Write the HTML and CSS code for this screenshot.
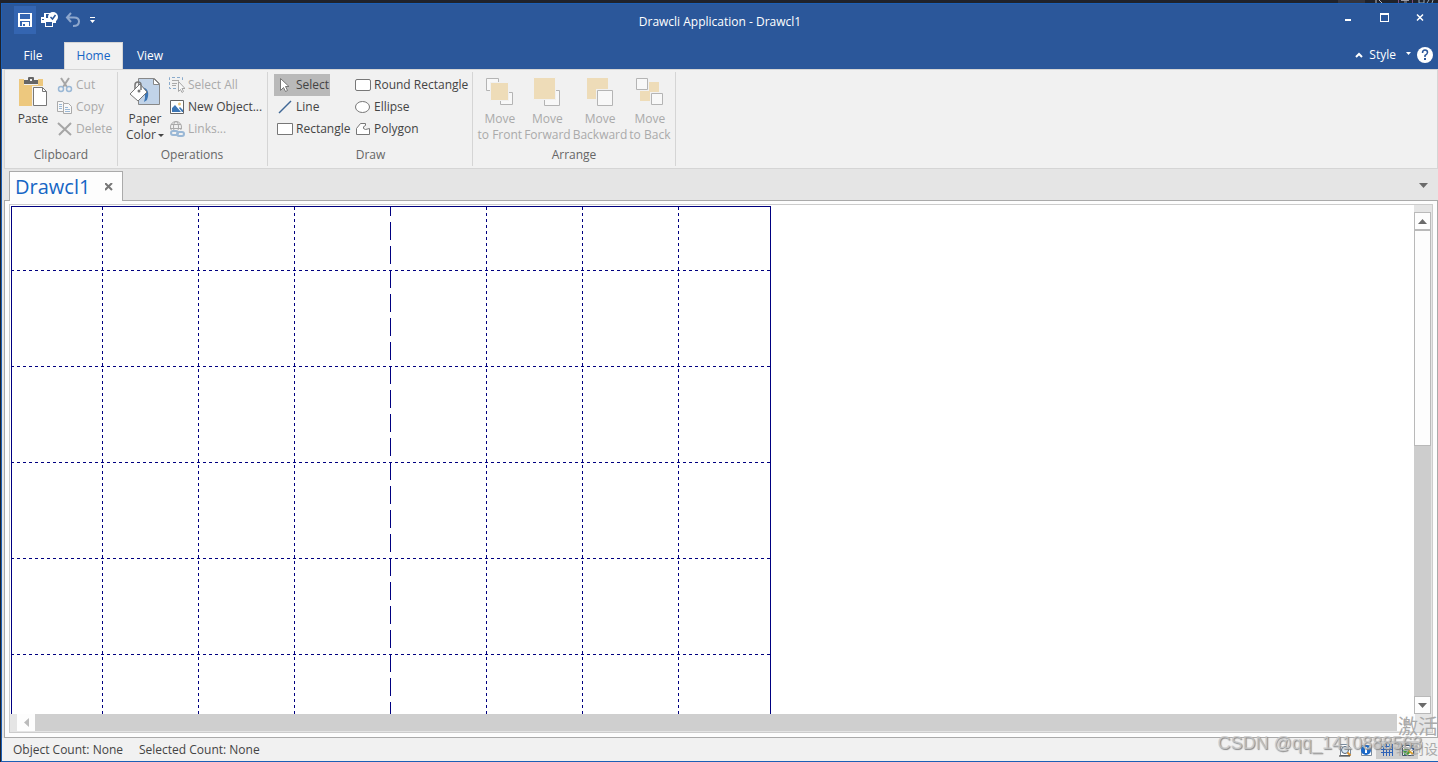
FILE: index.html
```html
<!DOCTYPE html>
<html lang="en">
<head>
    <meta charset="UTF-8">
    <title>Drawcli Application - Drawcl1</title>
    <link rel="stylesheet" href="styles.css">
</head>
<body>
    <svg class="backdrop" viewBox="0 0 100 3" aria-hidden="true">
        <path fill="#34343c" d="M0 0h27v3H0z"/>
        <path stroke="#b8b8c0" d="M38 0v3M41 0l3 3" fill="none"/>
        <path stroke="#7a4f80" d="M60.500 0v3M74.500 0v3" fill="none"/>
        <path stroke="#9a9aa4" d="M63 .5h8M66 2h3" fill="none"/>
        <path stroke="#8fa8bf" d="M81 0v3h5V0M91 0l-2 3M95 0l-1 3" fill="none"/>
    </svg>
    <div class="window">
        <header class="titlebar">
            <div class="quick">
                <button class="quick-btn quick-save" aria-label="Save">
                    <svg width="16" height="16" viewBox="0 0 16 16"><path fill="#fff" fill-rule="evenodd" d="M1 1h14v14H1zM3 2v5h10V2zM3 9v5h2v-4h7v4h1V9zM6 12v2h2v-2z"/></svg>
                </button>
                <button class="quick-btn" aria-label="Print">
                    <svg width="18" height="18" viewBox="0 0 18 18"><path fill="#fff" fill-rule="evenodd" d="M5 2h5v3h6v7h-3v4H5v-4H1V6h3V2zM6 3v4h3V3zM6 11v4h6v-4zM2 8v1h2V8z"/><circle cx="13" cy="6" r="5" fill="#fff"/><path d="M10.500 6l2 2 3-4" fill="none" stroke="#2b579a" stroke-width="1.500"/></svg>
                </button>
                <button class="quick-btn" aria-label="Undo">
                    <svg width="16" height="16" viewBox="0 0 16 16"><path d="M6 1L2 5.500 6 10M2 5.500h7c3 0 5 1.500 5 4S12 14 8 14" fill="none" stroke="#8ea7cd" stroke-width="2"/></svg>
                </button>
                <button class="quick-btn quick-more" aria-label="Customize">
                    <svg width="7" height="7" viewBox="0 0 7 7"><path fill="#fff" d="M1 0h5v1H1zM1 3h5L3.500 6z"/></svg>
                </button>
            </div>
            <div class="caption">Drawcli Application - Drawcl1</div>
            <div class="controls">
                <button aria-label="Minimize"><svg width="12" height="12" viewBox="0 0 12 12"><path fill="#fff" d="M3 7h6v2H3z"/></svg></button>
                <button aria-label="Maximize"><svg width="12" height="12" viewBox="0 0 12 12"><path fill="#fff" fill-rule="evenodd" d="M2 1h9v9H2zM3 3v6h7V3z"/></svg></button>
                <button aria-label="Close"><svg width="12" height="12" viewBox="0 0 12 12"><path d="M3 2.500l6 6M9 2.500l-6 6" stroke="#fff" stroke-width="1.500"/></svg></button>
            </div>
        </header>

        <nav class="tabs">
            <button class="tab tab-file">File</button>
            <button class="tab active">Home</button>
            <button class="tab">View</button>
            <div class="tabs-right">
                <button class="style-btn">
                    <svg width="8" height="6" viewBox="0 0 8 6"><path d="M1 5l3-3 3 3" fill="none" stroke="#fff" stroke-width="2"/></svg>
                    Style
                    <svg class="style-arrow" width="5" height="6" viewBox="0 0 5 6"><path fill="#fff" d="M0 0h5L2.500 3z"/></svg>
                </button>
                <button class="help" aria-label="Help">
                    <svg width="16" height="16" viewBox="0 0 16 16"><circle cx="8" cy="8" r="8" fill="#fff"/><path d="M5.500 6q0-3 2.500-3t2.500 2.500Q10.500 7 8 8.500V10" fill="none" stroke="#2b579a" stroke-width="1.500"/><path fill="#2b579a" d="M7 11h2v2H7z"/></svg>
                </button>
            </div>
        </nav>

        <div class="ribbon">
            <section class="group clipboard">
                <div class="group-body">
                    <button class="big">
                        <svg width="32" height="32" viewBox="0 0 32 32"><path fill="#edc87e" d="M2 4h24v27H2z"/><path fill="#f1f1f1" d="M7 3h14v7H7zM15 11h17v21H15z"/><path fill="#666" fill-rule="evenodd" d="M7 5h4V3q0-1 1-1h4q1 0 1 1v2h4v4H7zM13 4v2h2V4z"/><path fill="#fff" stroke="#777" d="M16.500 12.500h9l4 4v14h-13z"/><path fill="none" stroke="#777" d="M25.500 12.500v4h4"/></svg>
                        Paste
                    </button>
                    <div class="col">
                        <button class="small" disabled><svg width="16" height="16" viewBox="0 0 16 16"><path d="M4 1l6 9M12 1L6 10" stroke="#a6a6a6" stroke-width="2"/><g fill="none" stroke="#9ab8d6" stroke-width="1.500"><circle cx="4" cy="12" r="2.500"/><circle cx="12" cy="12" r="2.500"/></g></svg>Cut</button>
                        <button class="small" disabled><svg width="16" height="16" viewBox="0 0 16 16"><g fill="#f8f8f8" stroke="#aaa"><path d="M.5 2.500h5l3 3v7h-8z"/><path d="M6.500 4.500h5l3 3v7h-8z"/></g><path d="M2 5.500h3M2 7.500h3M2 9.500h3M8 8.500h3M8 10.500h5M8 12.500h5" stroke="#9ab8d6"/></svg>Copy</button>
                        <button class="small" disabled><svg width="16" height="16" viewBox="0 0 16 16"><path d="M1 2l13 12M14 2L2 14" stroke="#a6a6a6" stroke-width="2"/></svg>Delete</button>
                    </div>
                </div>
                <h2>Clipboard</h2>
            </section>

            <section class="group operations">
                <div class="group-body">
                    <button class="big">
                        <svg width="32" height="32" viewBox="0 0 32 32"><path fill="#c1d3e8" stroke="#888" d="M9.500 3.500h16l5 5v21h-21z"/><path fill="#fff" stroke="#888" d="M24.500 3.500v6h6z"/><path fill="#3c76b5" d="M13 12q9 2 5 13l-3 2q2-6 0-10z"/><path fill="#fff" stroke="#777" d="M1 19l10-10 7 8-9 9z"/><path fill="none" stroke="#777" stroke-width="1.500" d="M6 14v-4q0-3 3-3t3 3v5"/><circle cx="10" cy="16" r="1.500" fill="#777"/></svg>
                        Paper<br>Color<i class="caret"></i>
                    </button>
                    <div class="col">
                        <button class="small" disabled><svg width="16" height="16" viewBox="0 0 16 16"><path fill="none" stroke="#8aabcc" stroke-dasharray="3 2" d="M7 11.500H.5V.5h13V4"/><path stroke="#aaa" d="M3 3.500h7M3 6.500h5M3 8.500h4"/><path fill="#f8f8f8" stroke="#a6a6a6" d="M9.500 4.500v10l2-2 1.500 3 1.500-1-1.500-3h3z"/></svg>Select All</button>
                        <button class="small"><svg width="16" height="16" viewBox="0 0 16 16"><path fill="#fff" stroke="#666" d="M1.500 1.500h13v13H1.500z"/><path fill="#3c76b5" d="M3 13V9l3-3 6 7zM10 9l1-1 3 3v2h-1z"/><circle cx="10.500" cy="5" r="1.500" fill="#edc87e"/></svg>New Object...</button>
                        <button class="small" disabled><svg width="16" height="16" viewBox="0 0 16 16"><g fill="none" stroke="#aaa"><circle cx="7" cy="6" r="5.500"/><ellipse cx="7" cy="6" rx="2.500" ry="5.500"/><path d="M2 3.500h10M1 7.500h12"/></g><path fill="#f1f1f1" d="M1 9h15v7H1z"/><g fill="none" stroke="#9ab8d6" stroke-width="2"><rect x="2" y="10" width="7" height="4" rx="2"/><rect x="8" y="11" width="7" height="4" rx="2"/></g></svg>Links...</button>
                    </div>
                </div>
                <h2>Operations</h2>
            </section>

            <section class="group draw">
                <div class="group-body">
                    <div class="col">
                        <button class="small selected"><svg width="16" height="16" viewBox="0 0 16 16"><path fill="#fff" stroke="#777" d="M3.500 1.500v12l3-3 2 4 2-1-2-4h3.500z"/></svg>Select</button>
                        <button class="small"><svg width="16" height="16" viewBox="0 0 16 16"><path stroke="#3f6795" stroke-width="1.500" d="M2 14L14 2"/></svg>Line</button>
                        <button class="small"><svg width="16" height="16" viewBox="0 0 16 16"><path fill="#fff" stroke="#777" d="M.5 2.500h15v11H.5z"/></svg>Rectangle</button>
                    </div>
                    <div class="col">
                        <button class="small"><svg width="16" height="16" viewBox="0 0 16 16"><rect x=".5" y="2.500" width="15" height="11" rx="1.500" fill="#fff" stroke="#777"/></svg>Round Rectangle</button>
                        <button class="small"><svg width="16" height="16" viewBox="0 0 16 16"><ellipse cx="7.500" cy="8" rx="7" ry="5.500" fill="#fff" stroke="#777"/></svg>Ellipse</button>
                        <button class="small"><svg width="16" height="16" viewBox="0 0 16 16"><path fill="#fff" stroke="#777" d="M1.500 13.500v-6l4-5h5v2q-3 1-2 3t6 0v6z"/></svg>Polygon</button>
                    </div>
                </div>
                <h2>Draw</h2>
            </section>

            <section class="group arrange">
                <div class="group-body">
                    <button class="big" disabled>
                        <svg width="32" height="32" viewBox="0 0 32 32"><path fill="#f8f8f8" stroke="#b4b4b4" d="M2.500 3.500h12v12h-12zM16.500 17.500h12v12h-12z"/><path fill="#eedcb8" stroke="#f1f1f1" d="M6.500 7.500h18v18h-18z"/></svg>
                        Move<br>to Front
                    </button>
                    <button class="big" disabled>
                        <svg width="32" height="32" viewBox="0 0 32 32"><path fill="#f8f8f8" stroke="#b4b4b4" d="M13.500 15.500h15v15h-15z"/><path fill="#eedcb8" stroke="#f1f1f1" d="M2.500 2.500h22v22h-22z"/></svg>
                        Move<br>Forward
                    </button>
                    <button class="big" disabled>
                        <svg width="32" height="32" viewBox="0 0 32 32"><path fill="#eedcb8" d="M3 3h21v21H3z"/><path fill="#f1f1f1" d="M12 14h18v18H12z"/><path fill="#f8f8f8" stroke="#b4b4b4" d="M13.500 15.500h15v15h-15z"/></svg>
                        Move<br>Backward
                    </button>
                    <button class="big" disabled>
                        <svg width="32" height="32" viewBox="0 0 32 32"><path fill="#eedcb8" d="M15 7h10v10H15zM6 16h10v10H6z"/><path fill="#f1f1f1" d="M1 2h14v14H1zM16 17h14v14H16z"/><path fill="#f8f8f8" stroke="#b4b4b4" d="M2.500 3.500h11v11h-11zM17.500 18.500h11v11h-11z"/></svg>
                        Move<br>to Back
                    </button>
                </div>
                <h2>Arrange</h2>
            </section>
        </div>

        <div class="doc-tabs">
            <div class="doc-tab">
                <span>Drawcl1</span>
                <button aria-label="Close document"><svg width="8" height="8" viewBox="0 0 8 8"><path d="M0 0l7 7M7 0L0 7" stroke="#777" stroke-width="2"/></svg></button>
            </div>
            <button class="doc-list" aria-label="Document list"><svg width="9" height="5" viewBox="0 0 9 5"><path fill="#6a6a6a" d="M0 0h9L4.500 5z"/></svg></button>
        </div>

        <main class="frame">
            <div class="view">
                <div class="canvas">
                    <svg class="paper" width="760" height="960" shape-rendering="crispEdges" fill="none" stroke="#000080">
                        <rect x=".5" y=".5" width="759" height="959"/>
                        <g stroke-dasharray="3 3">
                            <path d="M91.500 1v958M187.500 1v958M283.500 1v958M475.500 1v958M571.500 1v958M667.500 1v958"/>
                            <path d="M0 64.500h760M0 160.500h760M0 256.500h760M0 352.500h760M0 448.500h760"/>
                        </g>
                        <path stroke-dasharray="18 6" stroke-dashoffset="8" d="M379.500 0v960"/>
                    </svg>
                </div>
                <div class="vscroll">
                    <button class="arrow" aria-label="Scroll up"><svg width="9" height="5" viewBox="0 0 9 5"><path fill="#6a6a6a" d="M0 5h9L4.500 0z"/></svg></button>
                    <div class="thumb"></div>
                    <button class="arrow down" aria-label="Scroll down"><svg width="9" height="5" viewBox="0 0 9 5"><path fill="#6a6a6a" d="M0 0h9L4.500 5z"/></svg></button>
                </div>
                <div class="hscroll">
                    <button aria-label="Scroll left"><svg width="5" height="9" viewBox="0 0 5 9"><path fill="#bbb" d="M5 0v9L0 4.500z"/></svg></button>
                    <div class="track"></div>
                    <button aria-label="Scroll right"><svg width="5" height="9" viewBox="0 0 5 9"><path fill="#bbb" d="M0 0v9l5-4.500z"/></svg></button>
                </div>
            </div>
        </main>

        <footer class="status">
            <span>Object Count: None</span>
            <span>Selected Count: None</span>
            <div class="status-icons">
                <button aria-label="Print preview"><svg width="16" height="16" viewBox="0 0 16 16"><path fill="#fff" stroke="#7a8a9c" d="M3.500 2.500h7l3 3v8h-10z"/><circle cx="8" cy="8" r="3.500" fill="#dbe9f5" stroke="#53647a"/><path d="M10.500 10.500l3 3" stroke="#d9902f" stroke-width="2"/><path d="M2 14h11" stroke="#333"/></svg></button>
                <button aria-label="Properties"><svg width="16" height="16" viewBox="0 0 16 16"><path fill="#fff" stroke="#7a8a9c" d="M3.500 3.500h10v10h-10z"/><circle cx="8" cy="8" r="5" fill="#1b68c8"/><path d="M8 5v6M7 6h1" fill="none" stroke="#fff" stroke-width="2"/></svg></button>
                <button class="on" aria-label="Grid"><svg width="16" height="16" viewBox="0 0 16 16"><path fill="none" stroke="#2f63b8" d="M2 4.500h12M2 7.500h12M2 10.500h12M4.500 2v12M7.500 2v12M10.500 2v12M13.500 2v12"/></svg></button>
                <button class="on" aria-label="Paper colour"><svg width="16" height="16" viewBox="0 0 16 16"><path fill="#fff" stroke="#45566a" d="M2.500 3.500h11v10h-11z"/><path fill="#3f9b3f" d="M3 8l4-3 4 5-3 3H4z"/><path fill="#2f5fae" d="M9 4h4v4z"/><path stroke="#d9a02f" stroke-width="2" d="M9 9l4 3"/></svg></button>
            </div>
        </footer>
        <div class="activate"><b>激活</b><span>转到设</span></div>
        <div class="watermark">CSDN @qq_1410888563</div>
    </div>
</body>
</html>
```
FILE: styles.css
```css
* {
    box-sizing: border-box;
}

body {
    margin: 0;
    padding: 3px 0 0 1px;
    min-height: 100vh;
    display: flex;
    background: #20222a;
    font-family: "Open Sans", "Noto Sans CJK SC", sans-serif;
    font-size: 12px;
    line-height: 16px;
    color: #444;
    overflow: hidden;
}

button {
    margin: 0;
    padding: 0;
    border: 0;
    background: none;
    font: inherit;
    color: inherit;
    display: flex;
    align-items: center;
    justify-content: center;
}

svg {
    display: block;
    flex: none;
}

.backdrop {
    position: absolute;
    top: 0;
    right: 0;
    width: 100px;
    height: 3px;
}

.window {
    position: relative;
    flex: 1;
    min-width: 0;
    display: flex;
    flex-direction: column;
    border-left: 1px solid #1c5fb5;
    border-bottom: 1px solid #1c5fb5;
    background: #e5e5e5;
    overflow: hidden;
}

/* title bar */
.titlebar {
    display: grid;
    grid-template-columns: 1fr auto 1fr;
    height: 39px;
    background: #2b579a;
    border-top: 1px solid #1c5fb5;
    color: #fff;
}

.quick {
    display: flex;
    padding: 2px 0 0 12px;
}

.quick-btn {
    width: 24px;
    height: 28px;
}

.quick-save {
    width: 22px;
    margin-right: 1px;
    background: #3465b1;
}

.quick-more {
    width: 14px;
}

.caption {
    line-height: 36px;
}

.controls {
    display: flex;
    justify-content: flex-end;
}

.controls button {
    width: 36px;
    height: 28px;
}

/* ribbon tabs */
.tabs {
    display: flex;
    height: 27px;
    background: #2b579a;
    color: #fff;
}

.tab {
    width: 54px;
}

.tab-file {
    width: 62px;
}

.tab.active {
    width: 59px;
    background: #f1f1f1;
    border: 1px solid #d5d5d5;
    border-bottom: 0;
    color: #1565c5;
}

.tabs-right {
    display: flex;
    margin-left: auto;
    padding: 0 5px 2px 0;
    align-items: center;
    gap: 6px;
}

.style-btn {
    gap: 6px;
}

.style-arrow {
    margin-left: 4px;
}

/* ribbon */
.ribbon {
    display: flex;
    height: 100px;
    margin-left: 2px;
    padding: 2px 0;
    background: #f1f1f1;
    border: 1px solid #d5d5d5;
}

.group {
    display: flex;
    flex-direction: column;
    border-right: 1px solid #d5d5d5;
}

.group-body {
    display: flex;
    flex: 1;
    padding-top: 2px;
}

.group h2 {
    margin: 0 0 3px;
    font-size: 12px;
    font-weight: normal;
    text-align: center;
    color: #666;
}

.clipboard {
    width: 113px;
    padding-left: 5px;
}

.operations {
    width: 150px;
    padding-left: 4px;
}

.draw {
    width: 205px;
    padding-left: 6px;
}

.arrange {
    width: 203px;
}

.arrange .group-body {
    justify-content: center;
    gap: 2px;
}

.clipboard h2,
.operations h2,
.draw h2 {
    padding-right: 5px;
}

.big {
    display: block;
    align-self: flex-start;
    width: 46px;
    text-align: center;
    white-space: nowrap;
}

.big svg {
    margin: 1px auto 4px;
}

.arrange .big {
    width: auto;
    padding: 0;
}

.caret {
    display: inline-block;
    vertical-align: middle;
    margin-left: 2px;
    border: 3px solid transparent;
    border-top-color: #444;
    border-bottom: 0;
}

.col {
    display: flex;
    flex-direction: column;
    align-items: flex-start;
}

.small {
    height: 22px;
    gap: 3px;
    padding: 0 3px 0 1px;
    white-space: nowrap;
}

.draw .col {
    min-width: 78px;
}

.draw .small {
    padding: 0 1px 0 3px;
}

.small.selected {
    background: #b9b9b9;
}

button:disabled {
    color: #aaa;
}

/* document tabs */
.doc-tabs {
    display: flex;
    justify-content: space-between;
    height: 31px;
    margin-left: 2px;
    padding: 2px 10px 0 5px;
}

.doc-tab {
    position: relative;
    z-index: 1;
    display: flex;
    align-items: center;
    justify-content: space-between;
    width: 114px;
    height: 30px;
    padding: 0 9px 0 5px;
    background: #fdfdfd;
    border: 1px solid #aaa;
    border-bottom: 0;
    font-size: 20px;
    color: #1565c5;
}

/* drawing area */
.frame {
    flex: 1;
    display: flex;
    margin-left: 2px;
    padding: 3px 4px 4px;
    background: #fdfdfd;
    border: 1px solid #aaa;
}

.view {
    flex: 1;
    min-width: 0;
    display: grid;
    grid-template-columns: 1fr 18px;
    grid-template-rows: 1fr 18px;
    border: 1px solid #ccc;
}

.canvas {
    min-height: 200px;
    padding: 1px;
    background: #fff;
    overflow: hidden;
    contain: size;
}

.vscroll {
    display: flex;
    flex-direction: column;
    padding-top: 7px;
    border-right: 1px solid #e5e5e5;
    background: linear-gradient(#e5e5e5 7px, #cdcdcd 7px);
}

.arrow {
    height: 18px;
    background: #fdfdfd;
    border: 1px solid #b9b9b9;
}

.down {
    margin-top: auto;
}

.thumb {
    height: 43%;
    background: #fdfdfd;
    border: 1px solid #b9b9b9;
}

.hscroll {
    grid-column: 1 / 3;
    display: flex;
    padding: 0 17px 1px 7px;
    background: #e5e5e5;
}

.hscroll button {
    width: 18px;
    background: #fdfdfd;
}

.track {
    flex: 1;
    background: #cfcfcf;
}

/* status bar */
.status {
    display: flex;
    align-items: center;
    gap: 16px;
    height: 23px;
    padding: 0 20px 0 11px;
    background: #f1f1f1;
}

.status-icons {
    display: flex;
    margin-left: auto;
}

.status-icons button {
    width: 21px;
    height: 18px;
}

.status-icons .on {
    background: #cdcdcd;
}

/* overlays */
.watermark {
    position: absolute;
    right: 16px;
    bottom: 8px;
    font-family: "Liberation Sans", sans-serif;
    font-size: 18px;
    line-height: 20px;
    color: rgba(200, 200, 200, 0.8);
    text-shadow: 1px 1px 1px #888;
}

.activate {
    position: absolute;
    right: 0;
    bottom: 2px;
    white-space: nowrap;
    text-align: right;
    color: #aaa;
}

.activate b {
    display: block;
    font-size: 20px;
    line-height: 24px;
    font-weight: normal;
}

.activate span {
    display: block;
    font-size: 14px;
    line-height: 20px;
}
```
